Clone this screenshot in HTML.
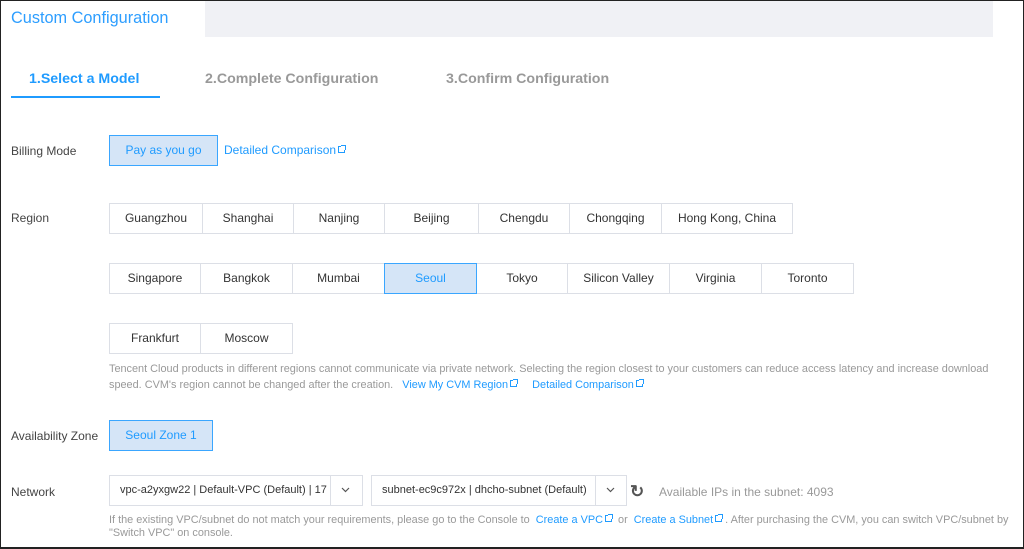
<!DOCTYPE html>
<html><head><meta charset="utf-8"><style>
*{box-sizing:border-box;margin:0;padding:0}
body{width:1024px;height:549px;background:#fff;font-family:"Liberation Sans",Arial,sans-serif;position:relative;overflow:hidden}
.frame{position:absolute;left:0;top:0;width:1024px;height:549px;border:1px solid #222;border-bottom-width:2px}
.a{position:absolute;white-space:nowrap}
.lbl{font-size:12px;color:#444}
.btn{position:absolute;height:31px;border:1px solid #dcdfe6;background:#fff;font-size:12px;color:#333;text-align:center;line-height:29px}
.sel{background:#d5e5f7;border:1px solid #3aa6ff;color:#1f9bff;z-index:2}
.link{color:#1f9bff}
.help{font-size:10.9px;color:#999;line-height:17px}
.ext{display:inline-block;width:7px;height:7px;border:1px solid #1f9bff;margin-left:2px;position:relative;vertical-align:1px}
.ext:after{content:"";position:absolute;right:-2px;top:-2px;width:4px;height:4px;background:#fff;border-top:1px solid #1f9bff;border-right:1px solid #1f9bff}
</style></head><body>
<div class="a" style="left:205px;top:1px;width:788px;height:36px;background:#f0f1f5"></div>
<div class="a" style="left:11px;top:9px;font-size:16.3px;color:#2d9eff">Custom Configuration</div>
<div class="a" style="left:29px;top:71px;font-size:14.2px;font-weight:bold;color:#1f9bff">1.Select a Model</div>
<div class="a" style="left:11px;top:96px;width:149px;height:2px;background:#1f9bff"></div>
<div class="a" style="left:205px;top:71px;font-size:14.2px;font-weight:bold;color:#999">2.Complete Configuration</div>
<div class="a" style="left:446px;top:71px;font-size:14.2px;font-weight:bold;color:#999">3.Confirm Configuration</div>

<div class="a lbl" style="left:11px;top:144px">Billing Mode</div>
<div class="btn sel" style="left:109px;top:135px;width:109px">Pay as you go</div>
<div class="a link" style="left:224px;top:143px;font-size:12px">Detailed Comparison<span class="ext"></span></div>

<div class="a lbl" style="left:11px;top:211px">Region</div>
<div class="btn" style="left:109px;top:203px;width:94px">Guangzhou</div>
<div class="btn" style="left:202px;top:203px;width:92px">Shanghai</div>
<div class="btn" style="left:293px;top:203px;width:92px">Nanjing</div>
<div class="btn" style="left:384px;top:203px;width:95px">Beijing</div>
<div class="btn" style="left:478px;top:203px;width:92px">Chengdu</div>
<div class="btn" style="left:569px;top:203px;width:93px">Chongqing</div>
<div class="btn" style="left:661px;top:203px;width:132px">Hong Kong, China</div>

<div class="btn" style="left:109px;top:263px;width:92px">Singapore</div>
<div class="btn" style="left:200px;top:263px;width:93px">Bangkok</div>
<div class="btn" style="left:292px;top:263px;width:93px">Mumbai</div>
<div class="btn sel" style="left:384px;top:263px;width:93px">Seoul</div>
<div class="btn" style="left:476px;top:263px;width:92px">Tokyo</div>
<div class="btn" style="left:567px;top:263px;width:103px">Silicon Valley</div>
<div class="btn" style="left:669px;top:263px;width:93px">Virginia</div>
<div class="btn" style="left:761px;top:263px;width:93px">Toronto</div>

<div class="btn" style="left:109px;top:323px;width:92px">Frankfurt</div>
<div class="btn" style="left:200px;top:323px;width:93px">Moscow</div>

<div class="a help" style="left:109px;top:361px">Tencent Cloud products in different regions cannot communicate via private network. Selecting the region closest to your customers can reduce access latency and increase download</div>
<div class="a help" style="left:109px;top:377px">speed. CVM's region cannot be changed after the creation. &nbsp;&nbsp;<span class="link">View My CVM Region<span class="ext"></span></span> &nbsp;&nbsp;&nbsp;&nbsp;<span class="link">Detailed Comparison<span class="ext"></span></span></div>

<div class="a lbl" style="left:11px;top:429px">Availability Zone</div>
<div class="btn sel" style="left:109px;top:420px;width:104px">Seoul Zone 1</div>

<div class="a lbl" style="left:11px;top:485px">Network</div>
<div class="btn" style="left:109px;top:475px;width:254px;text-align:left;padding-left:10px;font-size:11px">vpc-a2yxgw22 | Default-VPC (Default) | 17</div>
<div class="a" style="left:330px;top:476px;width:1px;height:29px;background:#dcdfe6"></div>
<svg class="a" style="left:341px;top:487px" width="9" height="6"><path d="M1 1 L4.5 4.5 L8 1" fill="none" stroke="#555" stroke-width="1.2"/></svg>
<div class="btn" style="left:371px;top:475px;width:256px;text-align:left;padding-left:10px;font-size:11px">subnet-ec9c972x | dhcho-subnet (Default)</div>
<div class="a" style="left:595px;top:476px;width:1px;height:29px;background:#dcdfe6"></div>
<svg class="a" style="left:606px;top:487px" width="9" height="6"><path d="M1 1 L4.5 4.5 L8 1" fill="none" stroke="#555" stroke-width="1.2"/></svg>
<div class="a" style="left:630px;top:482px;font-size:17px;color:#555;font-weight:bold">&#8635;</div>
<div class="a" style="left:659px;top:485px;font-size:12px;color:#999">Available IPs in the subnet: 4093</div>

<div class="a help" style="left:109px;top:514px;line-height:12px">If the existing VPC/subnet do not match your requirements, please go to the Console to &nbsp;<span class="link">Create a VPC<span class="ext"></span></span> &nbsp;or &nbsp;<span class="link">Create a Subnet<span class="ext"></span></span> . After purchasing the CVM, you can switch VPC/subnet by</div>
<div class="a help" style="left:109px;top:527px;line-height:12px">"Switch VPC" on console.</div>

<div class="frame"></div>
</body></html>
